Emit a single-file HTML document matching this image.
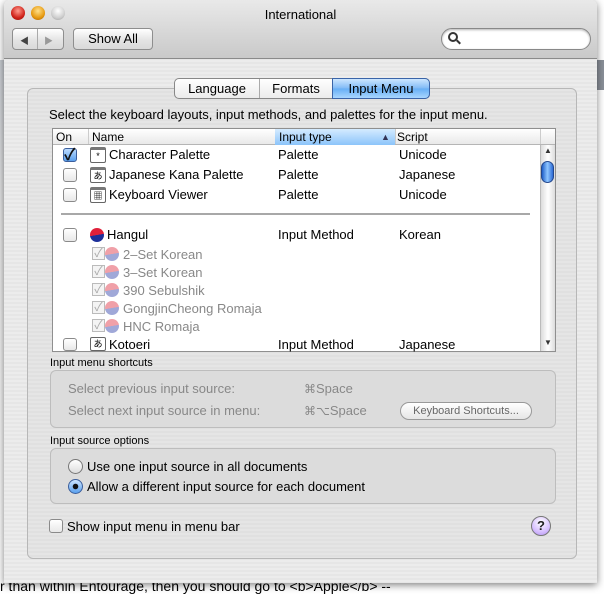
<!DOCTYPE html>
<html><head><style>
*{margin:0;padding:0;box-sizing:border-box}
body{width:604px;height:590px;overflow:hidden;background:#fff;font-family:"Liberation Sans","Noto Sans CJK JP",sans-serif;font-size:13px;color:#000;position:relative}
.a{position:absolute}
.win{left:4px;top:0;width:593px;height:583px;background:repeating-linear-gradient(#ececec 0 2px,#e6e6e6 2px 4px);border-radius:6px 6px 0 0;box-shadow:0 2px 8px rgba(0,0,0,.5);overflow:hidden}
.tb{left:0;top:0;width:593px;height:59px;background:linear-gradient(#e9e9e9,#c9c9c9);border-bottom:1px solid #8a8a8a}
.light{width:14px;height:14px;border-radius:50%;top:6px}
.btn{background:linear-gradient(#fff,#e4e4e4 55%,#d9d9d9);border:1px solid #8e8e8e;border-radius:4px}
.tabbox{left:23px;top:88px;width:550px;height:471px;border:1px solid #b7b7b7;border-radius:6px;background:repeating-linear-gradient(#e5e5e5 0 2px,#e0e0e0 2px 4px)}
.group{border:1px solid #bdbdbd;border-radius:6px;background:#dcdcdc}
.cb{width:14px;height:14px;border:1px solid #8a8a8a;border-radius:3px;background:linear-gradient(#fff,#e8e8e8)}
.row{font-size:13px;line-height:16px}
.gr{color:#888}
.ko{width:14px;height:14px;border-radius:50%;background:linear-gradient(170deg,#e0203a 50%,#1c2f9a 50%)}
.kog{width:14px;height:14px;border-radius:50%;background:linear-gradient(170deg,#f0a0a8 50%,#a0a8d8 50%)}
.gcb{width:13px;height:13px;border:1px solid #bbb;background:#f4f4f4;color:#aaa;font-size:12px;line-height:11px;text-align:center}
.ic{width:16px;height:16px;border:1px solid #666;border-radius:2px;background:#fff;font-size:9px;text-align:center;line-height:13px;border-top:3px solid #777}
</style></head><body>
<div class="a" style="left:0;top:578px;width:604px;font-size:14px;color:#000">r than within Entourage, then you should go to &lt;b&gt;Apple&lt;/b&gt; --</div>
<div class="a" style="left:0;top:60px;width:4px;height:520px;background:linear-gradient(#c8ccd2,#e8e8e8 30%,#fff)"></div>
<div class="a" style="left:597px;top:60px;width:7px;height:30px;background:#8a9099"></div>
<div class="a win">
 <div class="a tb"></div>
 <div class="a light" style="left:7px;background:radial-gradient(circle at 50% 35%,#ff9b8f,#d0231a 60%,#8c0f0a)"></div>
 <div class="a light" style="left:27px;background:radial-gradient(circle at 50% 35%,#ffe08a,#e79a10 60%,#a55a00)"></div>
 <div class="a light" style="left:47px;background:radial-gradient(circle at 50% 35%,#fff,#cfcfcf 60%,#9a9a9a)"></div>
 <div class="a" style="left:0;width:593px;top:7px;text-align:center;font-size:13px">International</div>
 <div class="a btn" style="left:8px;top:28px;width:52px;height:22px"></div>
 <div class="a" style="left:33px;top:29px;width:1px;height:20px;background:#aaa"></div>
 <div class="a" style="left:16px;top:34px;font-size:9px;color:#444">◀</div>
 <div class="a" style="left:40px;top:34px;font-size:9px;color:#999">▶</div>
 <div class="a btn" style="left:69px;top:28px;width:80px;height:22px;text-align:center;line-height:20px">Show All</div>
 <div class="a" style="left:437px;top:28px;width:150px;height:22px;border:1px solid #888;border-radius:11px;background:#fff;box-shadow:inset 0 1px 2px rgba(0,0,0,.3)"></div>
 <div class="a" style="left:444px;top:32px;width:10px;height:10px;border:2px solid #333;border-radius:50%"></div>
 <div class="a" style="left:452px;top:41px;width:5px;height:2px;background:#333;transform:rotate(45deg)"></div>

 <div class="a tabbox"></div>
 <div class="a" style="left:170px;top:78px;width:256px;height:21px;border:1px solid #888;border-radius:5px;background:linear-gradient(#fff,#ececec);font-size:13px;line-height:19px">
  <span class="a" style="left:0;width:84px;text-align:center">Language</span>
  <span class="a" style="left:84px;width:1px;height:19px;background:#aaa"></span>
  <span class="a" style="left:85px;width:72px;text-align:center">Formats</span>
  <span class="a" style="left:157px;top:-1px;width:98px;height:21px;background:linear-gradient(#cde6ff,#7fbaf6 50%,#66aef5 51%,#a9d6ff);border:1px solid #3a64a8;border-radius:0 5px 5px 0;text-align:center;line-height:19px">Input Menu</span>
 </div>
 <div class="a" style="left:45px;top:107px;font-size:13px">Select the keyboard layouts, input methods, and palettes for the input menu.</div>

 <div class="a" style="left:48px;top:128px;width:504px;height:224px;border:1px solid #8f8f8f;background:#fff"></div>
 <div class="a" style="left:49px;top:129px;width:502px;height:16px;background:linear-gradient(#fff,#e9e9e9);border-bottom:1px solid #b5b5b5;font-size:12px;line-height:16px">
  <span class="a" style="left:3px">On</span>
  <span class="a" style="left:35px;width:1px;height:15px;background:#ccc"></span>
  <span class="a" style="left:39px">Name</span>
  <span class="a" style="left:222px;width:120px;height:16px;background:linear-gradient(#d5ebff,#8cc4fa);padding-left:4px">Input type<span style="position:absolute;left:106px;font-size:9px;color:#335">▲</span></span>
  <span class="a" style="left:342px;width:1px;height:15px;background:#ccc"></span>
  <span class="a" style="left:344px">Script</span>
  <span class="a" style="left:487px;width:1px;height:15px;background:#ccc"></span>
 </div>
 <div class="a" style="left:536px;top:145px;width:15px;height:206px;background:linear-gradient(90deg,#dcdcdc,#fff 50%,#dcdcdc);border-left:1px solid #bbb"></div>
 <div class="a" style="left:540px;top:146px;font-size:8px;color:#333">▲</div>
 <div class="a" style="left:540px;top:338px;font-size:8px;color:#333">▼</div>
 <div class="a" style="left:537px;top:161px;width:13px;height:22px;border-radius:7px;background:linear-gradient(90deg,#1f5fc8,#8fc6ff 50%,#2c6ad4);border:1px solid #24488d"></div>

 <div class="a cb" style="left:59px;top:148px;background:linear-gradient(#bcdcff,#5aa0ee);border-color:#3b5e9c"></div>
 <div class="a" style="left:60px;top:141px;font-size:16px;font-weight:bold;color:#111">✓</div>
 <div class="a ic" style="left:86px;top:147px">*</div>
 <div class="a row" style="left:105px;top:147px">Character Palette</div>
 <div class="a cb" style="left:59px;top:168px"></div>
 <div class="a ic" style="left:86px;top:167px">あ</div>
 <div class="a row" style="left:105px;top:167px">Japanese Kana Palette</div>
 <div class="a cb" style="left:59px;top:188px"></div>
 <div class="a ic" style="left:86px;top:187px">▦</div>
 <div class="a row" style="left:105px;top:187px">Keyboard Viewer</div>
 <div class="a row" style="left:274px;top:147px">Palette</div>
 <div class="a row" style="left:274px;top:167px">Palette</div>
 <div class="a row" style="left:274px;top:187px">Palette</div>
 <div class="a row" style="left:395px;top:147px">Unicode</div>
 <div class="a row" style="left:395px;top:167px">Japanese</div>
 <div class="a row" style="left:395px;top:187px">Unicode</div>
 <div class="a" style="left:57px;top:213px;width:469px;height:2px;background:#a8a8a8"></div>

 <div class="a cb" style="left:59px;top:228px"></div>
 <div class="a ko" style="left:86px;top:228px"></div>
 <div class="a row" style="left:103px;top:227px">Hangul</div>
 <div class="a row" style="left:274px;top:227px">Input Method</div>
 <div class="a row" style="left:395px;top:227px">Korean</div>

 <div class="a gcb" style="left:88px;top:247px">✓</div><div class="a kog" style="left:101px;top:247px"></div><div class="a row gr" style="left:119px;top:247px">2–Set Korean</div>
 <div class="a gcb" style="left:88px;top:265px">✓</div><div class="a kog" style="left:101px;top:265px"></div><div class="a row gr" style="left:119px;top:265px">3–Set Korean</div>
 <div class="a gcb" style="left:88px;top:283px">✓</div><div class="a kog" style="left:101px;top:283px"></div><div class="a row gr" style="left:119px;top:283px">390 Sebulshik</div>
 <div class="a gcb" style="left:88px;top:301px">✓</div><div class="a kog" style="left:101px;top:301px"></div><div class="a row gr" style="left:119px;top:301px">GongjinCheong Romaja</div>
 <div class="a gcb" style="left:88px;top:319px">✓</div><div class="a kog" style="left:101px;top:319px"></div><div class="a row gr" style="left:119px;top:319px">HNC Romaja</div>

 <div class="a cb" style="left:59px;top:338px;height:13px"></div>
 <div class="a ic" style="left:86px;top:337px;height:14px;border-top:1px solid #666">あ</div>
 <div class="a row" style="left:105px;top:337px;height:14px;overflow:hidden">Kotoeri</div>
 <div class="a row" style="left:274px;top:337px">Input Method</div>
 <div class="a row" style="left:395px;top:337px">Japanese</div>

 <div class="a" style="left:46px;top:357px;font-size:11px">Input menu shortcuts</div>
 <div class="a group" style="left:46px;top:370px;width:506px;height:58px"></div>
 <div class="a gr" style="left:64px;top:381px">Select previous input source:</div>
 <div class="a gr" style="left:300px;top:381px;line-height:16px"><span style="font-family:'DejaVu Sans';font-size:12px">⌘</span>Space</div>
 <div class="a gr" style="left:64px;top:403px">Select next input source in menu:</div>
 <div class="a gr" style="left:300px;top:403px;line-height:16px"><span style="font-family:'DejaVu Sans';font-size:12px">⌘⌥</span>Space</div>
 <div class="a" style="left:396px;top:402px;width:132px;height:18px;border:1px solid #999;border-radius:9px;background:linear-gradient(#fff,#e6e6e6);font-size:11px;color:#666;text-align:center;line-height:16px">Keyboard Shortcuts...</div>

 <div class="a" style="left:46px;top:435px;font-size:11px">Input source options</div>
 <div class="a group" style="left:46px;top:448px;width:506px;height:56px"></div>
 <div class="a" style="left:64px;top:459px;width:15px;height:15px;border-radius:50%;border:1px solid #777;background:linear-gradient(#fff,#ddd)"></div>
 <div class="a" style="left:83px;top:459px">Use one input source in all documents</div>
 <div class="a" style="left:64px;top:479px;width:15px;height:15px;border-radius:50%;border:1px solid #3b5e9c;background:radial-gradient(circle,#111 2.5px,transparent 3px),linear-gradient(#cfe6ff,#5aa0ee)"></div>
 <div class="a" style="left:83px;top:479px">Allow a different input source for each document</div>

 <div class="a cb" style="left:45px;top:519px"></div>
 <div class="a" style="left:63px;top:519px">Show input menu in menu bar</div>
 <div class="a" style="left:527px;top:516px;width:20px;height:20px;border-radius:50%;border:1px solid #777;background:radial-gradient(circle at 50% 30%,#fff,#d8c0ff 60%,#b090f0);text-align:center;font-weight:bold;font-size:13px;line-height:18px;color:#222">?</div>
</div>
</body></html>
